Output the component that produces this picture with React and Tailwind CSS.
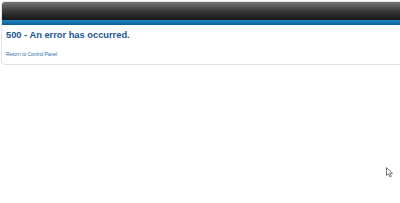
import React from 'react';

export default function App() {
  return (
    <div className="relative h-[203px] w-[400px] overflow-hidden bg-white font-['Liberation_Sans',Arial,sans-serif]">
      <div className="ml-px mt-px mr-[-6px] h-[64px] rounded-[4px] border border-[#e2e2e2] overflow-hidden">
        {/* header */}
        <div className="h-[18px] bg-gradient-to-b from-[#767676] via-[#3a3a3a] to-[#161616]" />
        <div className="h-[5px] bg-gradient-to-b from-[#1f86c6] to-[#0d5f98]" />

        {/* content */}
        <div className="px-[4px]">
          <h1 className="mt-[4px] text-[9.3px] leading-[12px] font-bold text-[#1a5596]">
            500 - An error has occurred.
          </h1>
          <a href="#" className="block mt-[11px] text-[4.9px] leading-[6px] text-[#2a6aa5]">
            Return to Control Panel
          </a>
        </div>
      </div>

      {/* mouse pointer */}
      <svg className="absolute left-[386px] top-[167px]" width="8" height="11" viewBox="0 0 8 11">
        <path d="M0.5 0.5 L0.5 8.5 L2.5 6.8 L4 10 L5.3 9.4 L3.9 6.3 L6.6 6.3 Z" fill="#fff" stroke="#555" strokeWidth="0.8" />
      </svg>
    </div>
  );
}
